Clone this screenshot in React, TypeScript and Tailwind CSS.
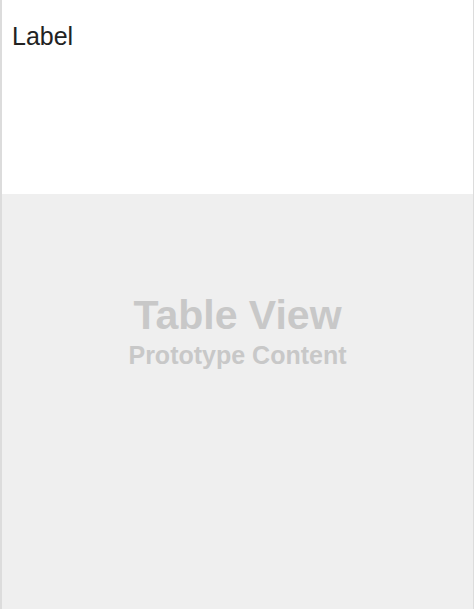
import React from 'react';

const App: React.FC = () => {
  return (
    <div className="w-[474px] h-[609px] flex flex-col border-l-2 border-r border-[#dcdcdc] bg-white font-['Liberation_Sans',Arial,sans-serif]">
      {/* header cell */}
      <div className="h-[194px] shrink-0 bg-white px-[10px] pt-[22px]">
        <span className="text-[25px] leading-[28px] text-[#222]">Label</span>
      </div>
      {/* table view placeholder */}
      <div className="flex-1 bg-[#efefef] flex flex-col items-center pt-[99px]">
        <div className="text-[41px] leading-[44px] font-bold text-[#c8c8c8]">Table View</div>
        <div className="mt-[3px] text-[25px] leading-[30px] font-bold text-[#c8c8c8]">Prototype Content</div>
      </div>
    </div>
  );
};

export default App;
